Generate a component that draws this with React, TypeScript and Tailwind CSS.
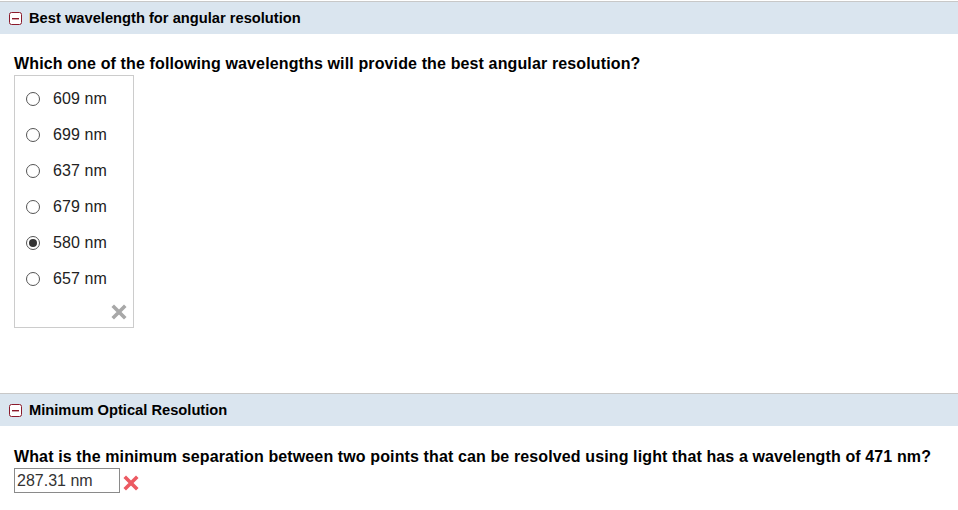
import React from "react";

const MinusBox = () => (
  <svg width="13" height="13" viewBox="0 0 13 13" className="shrink-0">
    <rect x="0.5" y="0.5" width="12" height="12" rx="2" fill="#fff" stroke="#8b1a2b" strokeWidth="1" />
    <rect x="3" y="6" width="7" height="1.4" fill="#8b1a2b" />
  </svg>
);

const XIcon = ({ color }: { color: string }) => (
  <svg width="16" height="16" viewBox="0 0 16 16">
    <path d="M3 3 L13 13 M13 3 L3 13" stroke={color} strokeWidth="3.6" strokeLinecap="square" />
  </svg>
);

const Radio = ({ checked }: { checked?: boolean }) => (
  <span className="w-[14px] h-[14px] rounded-full border border-[#555] bg-white flex items-center justify-center shrink-0">
    {checked && <span className="w-[8px] h-[8px] rounded-full bg-[#333]" />}
  </span>
);

const Header = ({ title }: { title: string }) => (
  <div className="border-t border-[#c8c8c8] bg-[#dae5ef] h-[33px] flex items-center pl-[9px] gap-[7px]">
    <MinusBox />
    <span className="text-[14.7px] font-bold text-black">{title}</span>
  </div>
);

export default function App() {
  const options = ["609 nm", "699 nm", "637 nm", "679 nm", "580 nm", "657 nm"];
  return (
    <div className="w-[958px] h-[510px] bg-white overflow-hidden text-black" style={{ fontFamily: '"Liberation Sans", Arial, sans-serif' }}>
      <div className="pt-[1px]">
        <Header title="Best wavelength for angular resolution" />
      </div>
      <div className="pl-[14px] pt-[21px]">
        <div className="text-[16px] font-bold leading-[18px] tracking-[0.13px]">
          Which one of the following wavelengths will provide the best angular resolution?
        </div>
        <div className="mt-[2px] w-[120px] h-[253px] border border-[#cccccc] pt-[5px] flex flex-col">
          {options.map((o, i) => (
            <div key={o} className="h-[36px] flex items-center pl-[11px] gap-[13px]">
              <Radio checked={i === 4} />
              <span className="text-[16px] text-[#222] tracking-[0.1px]">{o}</span>
            </div>
          ))}
          <div className="flex justify-end pr-[6px] pt-[7px]">
            <XIcon color="#a8a8a8" />
          </div>
        </div>
      </div>
      <div className="mt-[65px]">
        <Header title="Minimum Optical Resolution" />
      </div>
      <div className="pl-[14px] pt-[22px]">
        <div className="text-[16px] font-bold leading-[18px] tracking-[0.12px]">
          What is the minimum separation between two points that can be resolved using light that has a wavelength of 471 nm?
        </div>
        <div className="mt-[2px] flex items-center gap-[3px]">
          <div className="w-[106px] h-[25px] border border-[#8a8a8a] flex items-center pl-[2px] text-[16px] text-[#333]">
            287.31 nm
          </div>
          <div className="pt-[5px]">
            <XIcon color="#ec5a62" />
          </div>
        </div>
      </div>
    </div>
  );
}
